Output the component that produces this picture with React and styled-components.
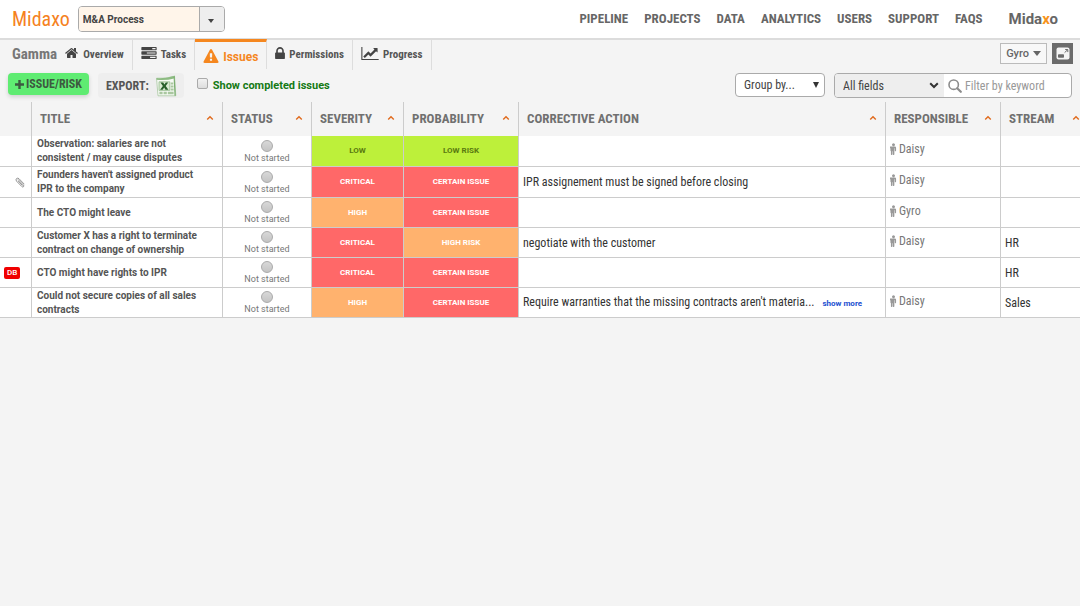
import React from "react";
import styled, { createGlobalStyle, css } from "styled-components";

const GlobalStyle = createGlobalStyle`
  *, *::before, *::after { box-sizing: border-box; }
  body {
    margin: 0;
    background: #f4f4f4;
    color: #333;
    font-family: Roboto, "Liberation Sans", sans-serif;
    font-size: 12px;
  }
  button, input, select { font: inherit; color: inherit; margin: 0; }
`;

const condensed = css`
  font-family: "Roboto Condensed", Roboto, "Liberation Sans", sans-serif;
`;

/* ---------- icons ---------- */

const Glyph = styled.svg`
  display: block;
  flex: none;
  width: ${(p) => p.$w || p.$size}px;
  height: ${(p) => p.$size}px;
  fill: currentColor;
`;

const paths = {
  home: "M1408 992v480q0 26-19 45t-45 19h-384v-384h-256v384h-384q-26 0-45-19t-19-45v-480q0-1 .5-3t.5-3l575-474 575 474q1 2 1 6zm223-69l-62 74q-8 9-21 11h-3q-13 0-21-7l-692-577-692 577q-12 8-24 7-13-2-21-11l-62-74q-8-10-7-23.5t11-21.5l719-599q32-26 76-26t76 26l244 204v-195q0-14 9-23t23-9h192q14 0 23 9t9 23v408l219 182q10 8 11 21.5t-7 23.5z",
  tasks:
    "M1024 1408h640v-128h-640v128zm-384-512h1024v-128h-1024v128zm640-512h384v-128h-384v128zm512 832v256q0 26-19 45t-45 19h-1664q-26 0-45-19t-19-45v-256q0-26 19-45t45-19h1664q26 0 45 19t19 45zm0-512v256q0 26-19 45t-45 19h-1664q-26 0-45-19t-19-45v-256q0-26 19-45t45-19h1664q26 0 45 19t19 45zm0-512v256q0 26-19 45t-45 19h-1664q-26 0-45-19t-19-45v-256q0-26 19-45t45-19h1664q26 0 45 19t19 45z",
  warning:
    "M1024 1375v-190q0-14-9.5-23.5t-22.5-9.5h-192q-13 0-22.5 9.5t-9.5 23.5v190q0 14 9.5 23.5t22.5 9.5h192q13 0 22.5-9.5t9.5-23.5zm-2-374l18-459q0-12-10-19-13-11-24-11h-220q-11 0-24 11-10 7-10 21l17 457q0 10 10 16.5t24 6.5h185q14 0 23.5-6.5t10.5-16.5zm-14-934l768 1408q35 63-2 126-17 29-46.5 46t-63.5 17h-1536q-34 0-63.5-17t-46.5-46q-37-63-2-126l768-1408q17-31 47-49t65-18 65 18 47 49z",
  lock: "M640 768h512v-192q0-106-75-181t-181-75-181 75-75 181v192zm832 96v576q0 40-28 68t-68 28h-960q-40 0-68-28t-28-68v-576q0-40 28-68t68-28h32v-192q0-184 132-316t316-132 316 132 132 316v192h32q40 0 68 28t28 68z",
  chart:
    "M2048 1536v128h-2048v-1536h128v1408h1920zm-128-1248v435q0 21-19.5 29.5t-35.5-7.5l-121-121-633 633q-10 10-23 10t-23-10l-233-233-416 416-192-192 585-585q10-10 23-10t23 10l233 233 464-464-121-121q-16-16-7.5-35.5t29.5-19.5h435q14 0 23 9t9 23z",
  male: "M1280 704v416q0 40-28 68t-68 28-68-28-28-68v-352h-64v912q0 46-33 79t-79 33-79-33-33-79v-464h-64v464q0 46-33 79t-79 33-79-33-33-79v-912h-64v352q0 40-28 68t-68 28-68-28-28-68v-416q0-80 56-136t136-56h640q80 0 136 56t56 136zm-160-448q0 93-65.5 158.5t-158.5 65.5-158.5-65.5-65.5-158.5 65.5-158.5 158.5-65.5 158.5 65.5 65.5 158.5z",
};

const boxes = {
  home: "64 128 1664 1536",
  tasks: "0 128 1792 1408",
  warning: "0 0 1792 1664",
  lock: "320 128 1152 1408",
  chart: "0 128 2048 1536",
  male: "512 0 768 1792",
};

const Icon = ({ name, size, width }) => (
  <Glyph viewBox={boxes[name]} $size={size} $w={width} aria-hidden="true">
    <path d={paths[name]} />
  </Glyph>
);

const PlusIcon = () => (
  <Glyph viewBox="0 0 9 9" $size={9} aria-hidden="true">
    <path d="M3.3 0h2.4v3.3H9v2.4H5.7V9H3.3V5.7H0V3.3h3.3z" />
  </Glyph>
);

const CaretDown = ({ width = 8, size = 5 }) => (
  <Glyph viewBox="0 0 8 5" $size={size} $w={width} preserveAspectRatio="none" aria-hidden="true">
    <path d="M0 0h8L4 5z" />
  </Glyph>
);

const SortIcon = () => (
  <Glyph viewBox="0 0 8 6" $size={6} $w={8} aria-hidden="true">
    <path d="M1.2 4.6L4 1.8l2.8 2.8" fill="none" stroke="#e06a1c" strokeWidth="1.4" />
  </Glyph>
);

const ChevronDown = () => (
  <Glyph viewBox="0 0 10 7" $size={7} $w={10} aria-hidden="true">
    <path d="M1.2 1.2L5 5l3.8-3.8" fill="none" stroke="#333" strokeWidth="2" />
  </Glyph>
);

const SearchIcon = () => (
  <Glyph viewBox="0 0 14 14" $size={14} aria-hidden="true">
    <circle cx="5.7" cy="5.7" r="4.7" fill="none" stroke="#8c8c8c" strokeWidth="1.6" />
    <path d="M9.2 9.2l3.6 3.6" stroke="#8c8c8c" strokeWidth="2.2" strokeLinecap="round" />
  </Glyph>
);

const ExpandIcon = () => (
  <Glyph viewBox="0 0 14 13" $size={13} $w={14} aria-hidden="true">
    <rect x="0.5" y="0.5" width="13" height="12" rx="2" fill="#f4f4f4" />
    <rect x="2" y="7.2" width="6" height="3.6" rx="0.8" fill="#6b6b6b" />
    <path d="M8.6 5.6l3-2.8M9.2 2.5h2.6v2.6" fill="none" stroke="#6b6b6b" strokeWidth="1" />
  </Glyph>
);

const ExcelIcon = () => (
  <Glyph viewBox="0 0 22 22" $size={22} aria-hidden="true">
    <path d="M1.5 3.2Q11 4.2 19.5 1.2L20.8 20.8H3z" fill="#f6faf4" stroke="#a9c8a2" strokeWidth="0.8" />
    <path d="M1.5 3Q11 3.8 19.7.8l.3 2.400Q11 5.800 1.600 4.800z" fill="#8dbb82" />
    <path d="M19.7.8l1.1 20h-1.300L18.600 2.200z" fill="#7fb074" />
    <path d="M4 6.8h10.800v8.600H4z" fill="#d9ead3" stroke="#8cb583" strokeWidth="0.7" />
    <path d="M15.7 7.4h2.6v2h-2.6zM15.7 10.4h2.8v2h-2.8zM15.7 13.4h2.9v2h-2.9zM4.4 16.8h3.2v2.4H4.4zM8.6 16.8h3.2v2.4H8.6zM12.8 16.8h5.8v2.4h-5.8z" fill="#a9c79f" />
    <path d="M5.4 7.6h2.8l1.2 2 1.4-2h2.4l-2.5 3.4 2.7 3.7h-2.9l-1.3-2.2-1.6 2.2H5.1L7.9 11z" fill="#285f2a" />
  </Glyph>
);

const ClipIcon = () => (
  <Glyph viewBox="0 0 11 11" $size={11} aria-hidden="true">
    <path
      d="M3.2 2.6l5.2 5.4q.9 1 .1 1.7-.8.7-1.7-.2L1.5 4.1Q.5 2.8 1.5 1.6 2.8.6 4 1.7l5 5.2M3.400 4.200l3.800 4"
      fill="none"
      stroke="#888"
      strokeWidth="0.9"
      strokeLinecap="round"
    />
  </Glyph>
);

/* ---------- top bar ---------- */

const TopBar = styled.header`
  display: flex;
  align-items: center;
  justify-content: space-between;
  height: 40px;
  padding: 0 22px 0 12px;
  background: #fff;
  border-bottom: 2px solid #dcdcdc;
`;

const TopLeft = styled.div`
  display: flex;
  align-items: center;
  gap: 8px;
`;

const BrandLink = styled.a`
  ${condensed}
  font-size: 20px;
  line-height: 36px;
  color: #f5821f;
  text-decoration: none;
`;

const ProcessBox = styled.div`
  display: grid;
  grid-template-columns: 1fr 25px;
  align-items: center;
  width: 147px;
  height: 26px;
  border: 1px solid #aaa;
  border-radius: 4px;
  overflow: hidden;
  background: #eee;
`;

const ProcessSelect = styled.select`
  grid-area: 1 / 1 / 2 / 3;
  align-self: stretch;
  appearance: none;
  border: 0;
  padding: 0 30px 0 4px;
  background: linear-gradient(to left, #eee 24px, #aaa 24px, #aaa 25px, #fff5ea 25px);
  font-size: 10px;
  font-weight: 700;
  color: #444;
`;

const ProcessArrow = styled.span`
  grid-area: 1 / 2;
  display: flex;
  justify-content: center;
  padding-top: 4px;
  color: #444;
  pointer-events: none;
`;

const MainNav = styled.nav`
  display: flex;
  align-items: center;
  gap: 16px;
`;

const NavLink = styled.a`
  ${condensed}
  font-size: 13px;
  font-weight: 700;
  line-height: 36px;
  color: #666;
  text-decoration: none;
`;

const Logo = styled.a`
  margin-left: 10px;
  font-size: 15px;
  font-weight: 700;
  line-height: 36px;
  color: #666;
  text-decoration: none;
`;

const Accent = styled.span`
  color: #f7941d;
`;

/* ---------- project tabs ---------- */

const ProjectBar = styled.div`
  display: flex;
  align-items: flex-start;
  justify-content: space-between;
  height: 30px;
  padding: 0 7px 0 12px;
`;

const TabList = styled.nav`
  display: flex;
`;

const ProjectName = styled.h1`
  ${condensed}
  margin: 0;
  font-size: 15px;
  font-weight: 700;
  line-height: 29px;
  color: #777;
`;

const Tab = styled.a`
  ${condensed}
  display: flex;
  align-items: center;
  gap: 4px;
  height: 30px;
  padding: 0 8px 1px;
  border-right: 1px solid #ddd;
  font-size: 11px;
  font-weight: 700;
  color: #555;
  text-decoration: none;

  & > svg { color: #444; margin-bottom: 3px; }

  ${(p) =>
    p.$active &&
    css`
      margin-top: -1px;
      padding: 3px 8px 0;
      border-top: 3px solid #f5871f;
      font-family: Roboto, "Liberation Sans", sans-serif;
      font-size: 12px;
      color: #f5871f;
      & > svg { color: #f5871f; }
    `}
`;

const UserTools = styled.div`
  display: flex;
  gap: 5px;
  padding-top: 3px;
`;

const UserButton = styled.button`
  display: flex;
  align-items: center;
  gap: 4px;
  height: 21px;
  padding: 0 5px;
  border: 1px solid #bbb;
  background: #f8f8f8;
  font-size: 11px;
  font-weight: 500;
  color: #666;
`;

const ExpandButton = styled.button`
  display: flex;
  align-items: center;
  justify-content: center;
  width: 21px;
  height: 21px;
  padding: 0;
  border: 0;
  background: #6b6b6b;
`;

/* ---------- action bar ---------- */

const ActionBar = styled.div`
  display: flex;
  align-items: flex-start;
  justify-content: space-between;
  height: 32px;
  padding: 3px 8px 0;
`;

const ActionGroup = styled.div`
  display: flex;
  align-items: flex-start;
  gap: 9px;
`;

const AddButton = styled.button`
  ${condensed}
  display: flex;
  align-items: center;
  gap: 2px;
  height: 22px;
  padding: 0 7px;
  border: 0;
  border-radius: 4px;
  background: #5fec72;
  box-shadow: 0 2px 4px rgba(0, 0, 0, 0.15);
  font-size: 12px;
  font-weight: 700;
  color: #3d5a40;
`;

const ExportButton = styled.button`
  ${condensed}
  display: flex;
  align-items: center;
  gap: 6px;
  height: 25px;
  padding: 0 7px 0 8px;
  border: 0;
  border-radius: 4px;
  background: #eee;
  font-size: 12px;
  font-weight: 700;
  color: #555;
`;

const CompletedLabel = styled.label`
  display: flex;
  align-items: flex-start;
  gap: 5px;
  padding: 5px 0 0 4px;
  font-size: 11px;
  font-weight: 700;
  line-height: 16px;
  color: #157a15;
`;

const Checkbox = styled.input`
  appearance: none;
  width: 11px;
  height: 11px;
  border: 1px solid #aaa;
  border-radius: 2px;
  background: linear-gradient(#f2f2f2, #ddd);
  &:checked { background: #157a15; }
`;

const SelectBox = styled.div`
  display: grid;
  align-items: center;
  justify-items: end;
  width: ${(p) => p.$width}px;
  height: 24px;
  padding-right: 5px;
  color: #333;

  & > * { grid-area: 1 / 1; pointer-events: none; }
  & > select { pointer-events: auto; }
`;

const PlainSelect = styled.select`
  ${condensed}
  appearance: none;
  justify-self: stretch;
  align-self: stretch;
  margin-right: -5px;
  padding: 0 20px 0 8px;
  border: 0;
  background: none;
  font-size: 12px;
  color: #444;
`;

const GroupBox = styled(SelectBox)`
  border: 1px solid #aaa;
  border-radius: 4px;
  background: #fff;
`;

const SearchBox = styled.div`
  display: flex;
  align-items: center;
  width: 238px;
  height: 25px;
  border: 1px solid #aaa;
  border-radius: 4px;
  background: #fff;
  overflow: hidden;
`;

const FieldBox = styled(SelectBox)`
  background: #eee;
`;

const SearchLabel = styled.label`
  display: flex;
  flex: 1;
  align-items: center;
  gap: 3px;
  min-width: 0;
  padding-left: 4px;
`;

const SearchInput = styled.input`
  ${condensed}
  flex: 1;
  min-width: 0;
  padding: 0;
  border: 0;
  outline: 0;
  background: none;
  font-size: 12px;
  &::placeholder { color: #999; opacity: 1; }
`;

/* ---------- table ---------- */

const TableScroll = styled.main`
  overflow: hidden;
`;

const IssueTable = styled.table`
  width: calc(100% + 8px);
  table-layout: fixed;
  border-collapse: separate;
  border-spacing: 0;
`;

const Col = styled.col`
  width: ${(p) => (p.$width ? p.$width + "px" : "auto")};
`;

const HeadCell = styled.th`
  height: 34px;
  padding: 0 8px 2px;
  border-left: 1px solid #ccc;
  text-align: left;
  &:first-child { border-left: 0; }
`;

const HeadButton = styled.button`
  ${condensed}
  display: flex;
  align-items: center;
  justify-content: space-between;
  width: 100%;
  padding: 0;
  border: 0;
  background: none;
  font-size: 13px;
  font-weight: 700;
  color: #707070;
`;

const Row = styled.tr`
  height: 30px;
  background: #fff;
  &:nth-child(-n + 2) { height: 31px; }
`;

const Cell = styled.td`
  ${condensed}
  padding: 0 4px;
  border-left: 1px solid #ccc;
  border-bottom: 1px solid #ccc;
  font-size: 12px;
  line-height: 14px;
  color: #333;
  white-space: nowrap;
  &:first-child { border-left: 0; }
`;

const TitleCell = styled(Cell)`
  padding-left: 5px;
  font-family: Roboto, "Liberation Sans", sans-serif;
  font-size: 10px;
  font-weight: 700;
  color: #555;
`;

const FlagInner = styled.div`
  display: flex;
  justify-content: ${(p) => (p.$end ? "flex-end" : "flex-start")};
  padding-right: 1px;
`;

const Badge = styled.span`
  padding: 0 3px;
  border-radius: 2px;
  background: #f00000;
  font-family: Roboto, "Liberation Sans", sans-serif;
  font-size: 8px;
  font-weight: 500;
  line-height: 12px;
  color: #fff;
`;

const StatusInner = styled.div`
  display: flex;
  flex-direction: column;
  align-items: center;
  font-family: Roboto, "Liberation Sans", sans-serif;
  font-size: 9px;
  line-height: 10px;
  color: #777;
`;

const StatusDot = styled.span`
  width: 12px;
  height: 12px;
  margin-bottom: 1px;
  border: 1px solid #aaa;
  border-radius: 50%;
  background: linear-gradient(#d8d8d8, #c4c4c4);
`;

const levels = {
  low: ["#bdf03a", "#5a7a10"],
  high: ["#ffb26e", "#fff"],
  critical: ["#ff6868", "#fff"],
};

const LevelCell = styled(Cell)`
  background: ${(p) => levels[p.$level][0]} padding-box;
  color: ${(p) => levels[p.$level][1]};
  font-family: Roboto, "Liberation Sans", sans-serif;
  font-size: 8px;
  font-weight: 700;
  text-align: center;
`;

const Person = styled.div`
  display: flex;
  align-items: center;
  gap: 2px;
  padding-bottom: 4px;
  color: #777;
  & > svg { color: #999; }
`;

const ShowMore = styled.a`
  margin-left: 8px;
  font-family: Roboto, "Liberation Sans", sans-serif;
  font-size: 8px;
  font-weight: 700;
  color: #1a4fd0;
  text-decoration: none;
`;

const navItems = ["PIPELINE", "PROJECTS", "DATA", "ANALYTICS", "USERS", "SUPPORT", "FAQS"];

const columns = [
  { label: "", width: 31 },
  { label: "TITLE", width: 191 },
  { label: "STATUS", width: 89 },
  { label: "SEVERITY", width: 92 },
  { label: "PROBABILITY", width: 115 },
  { label: "CORRECTIVE ACTION" },
  { label: "RESPONSIBLE", width: 115 },
  { label: "STREAM", width: 88 },
];

const issues = [
  { title: ["Observation: salaries are not", "consistent / may cause disputes"], sev: ["LOW", "low"], prob: ["LOW RISK", "low"], who: "Daisy" },
  { flag: "clip", title: ["Founders haven't assigned product", "IPR to the company"], sev: ["CRITICAL", "critical"], prob: ["CERTAIN ISSUE", "critical"], action: "IPR assignement must be signed before closing", who: "Daisy" },
  { title: ["The CTO might leave"], sev: ["HIGH", "high"], prob: ["CERTAIN ISSUE", "critical"], who: "Gyro" },
  { title: ["Customer X has a right to terminate", "contract on change of ownership"], sev: ["CRITICAL", "critical"], prob: ["HIGH RISK", "high"], action: "negotiate with the customer", who: "Daisy", stream: "HR" },
  { flag: "db", title: ["CTO might have rights to IPR"], sev: ["CRITICAL", "critical"], prob: ["CERTAIN ISSUE", "critical"], stream: "HR" },
  { title: ["Could not secure copies of all sales", "contracts"], sev: ["HIGH", "high"], prob: ["CERTAIN ISSUE", "critical"], action: "Require warranties that the missing contracts aren't materia...", more: true, who: "Daisy", stream: "Sales" },
];

const IssueRow = ({ issue }) => (
  <Row>
    <Cell>
      <FlagInner $end={issue.flag === "clip"}>
        {issue.flag === "clip" && <ClipIcon />}
        {issue.flag === "db" && <Badge>DB</Badge>}
      </FlagInner>
    </Cell>
    <TitleCell>
      {issue.title.map((line) => (
        <div key={line}>{line}</div>
      ))}
    </TitleCell>
    <Cell>
      <StatusInner>
        <StatusDot />
        Not started
      </StatusInner>
    </Cell>
    <LevelCell $level={issue.sev[1]}>{issue.sev[0]}</LevelCell>
    <LevelCell $level={issue.prob[1]}>{issue.prob[0]}</LevelCell>
    <Cell>
      {issue.action}
      {issue.more && <ShowMore href="#more">show more</ShowMore>}
    </Cell>
    <Cell>
      {issue.who && (
        <Person>
          <Icon name="male" size={12} width={7} />
          {issue.who}
        </Person>
      )}
    </Cell>
    <Cell>{issue.stream}</Cell>
  </Row>
);

export default function App() {
  return (
    <>
      <GlobalStyle />
      <TopBar>
        <TopLeft>
          <BrandLink href="#home">Midaxo</BrandLink>
          <ProcessBox>
            <ProcessSelect aria-label="Process">
              <option>M&amp;A Process</option>
            </ProcessSelect>
            <ProcessArrow>
              <CaretDown width={6} size={4} />
            </ProcessArrow>
          </ProcessBox>
        </TopLeft>
        <MainNav>
          {navItems.map((item) => (
            <NavLink key={item} href={"#" + item.toLowerCase()}>
              {item}
            </NavLink>
          ))}
          <Logo href="#midaxo">
            Mida<Accent>x</Accent>o
          </Logo>
        </MainNav>
      </TopBar>

      <ProjectBar>
        <TabList>
          <ProjectName>Gamma</ProjectName>
          <Tab href="#overview">
            <Icon name="home" size={12} width={14} />
            Overview
          </Tab>
          <Tab href="#tasks">
            <Icon name="tasks" size={12} width={16} />
            Tasks
          </Tab>
          <Tab href="#issues" $active aria-current="page">
            <Icon name="warning" size={14} width={16} />
            Issues
          </Tab>
          <Tab href="#permissions">
            <Icon name="lock" size={12} width={10} />
            Permissions
          </Tab>
          <Tab href="#progress">
            <Icon name="chart" size={13} width={18} />
            Progress
          </Tab>
        </TabList>
        <UserTools>
          <UserButton type="button">
            Gyro
            <CaretDown />
          </UserButton>
          <ExpandButton type="button" aria-label="Expand">
            <ExpandIcon />
          </ExpandButton>
        </UserTools>
      </ProjectBar>

      <ActionBar>
        <ActionGroup>
          <AddButton type="button">
            <PlusIcon />
            ISSUE/RISK
          </AddButton>
          <ExportButton type="button">
            EXPORT:
            <ExcelIcon />
          </ExportButton>
          <CompletedLabel>
            <Checkbox type="checkbox" />
            Show completed issues
          </CompletedLabel>
        </ActionGroup>
        <ActionGroup>
          <GroupBox $width={90}>
            <PlainSelect aria-label="Group by">
              <option>Group by...</option>
            </PlainSelect>
            <CaretDown width={6} size={6} />
          </GroupBox>
          <SearchBox>
            <FieldBox $width={109}>
              <PlainSelect aria-label="Field">
                <option>All fields</option>
              </PlainSelect>
              <ChevronDown />
            </FieldBox>
            <SearchLabel>
              <SearchIcon />
              <SearchInput type="text" placeholder="Filter by keyword" aria-label="Filter by keyword" />
            </SearchLabel>
          </SearchBox>
        </ActionGroup>
      </ActionBar>

      <TableScroll>
        <IssueTable>
          <colgroup>
            {columns.map((c, i) => (
              <Col key={i} $width={c.width} />
            ))}
          </colgroup>
          <thead>
            <tr>
              {columns.map((c, i) => (
                <HeadCell key={i} scope="col">
                  {c.label && (
                    <HeadButton type="button">
                      {c.label}
                      <SortIcon />
                    </HeadButton>
                  )}
                </HeadCell>
              ))}
            </tr>
          </thead>
          <tbody>
            {issues.map((issue) => (
              <IssueRow key={issue.title[0]} issue={issue} />
            ))}
          </tbody>
        </IssueTable>
      </TableScroll>
    </>
  );
}
